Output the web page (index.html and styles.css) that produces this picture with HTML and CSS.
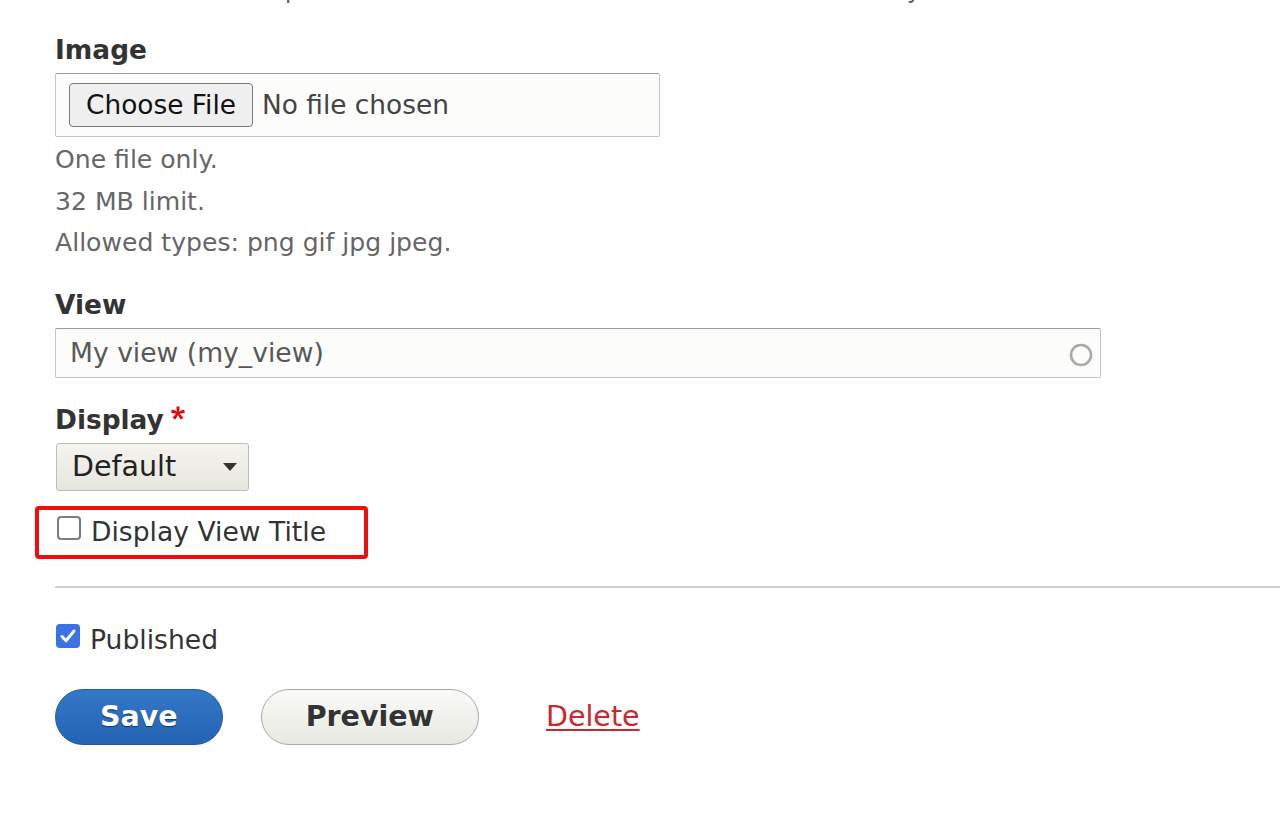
FILE: index.html
```html
<!DOCTYPE html>
<html lang="en">
<head>
<meta charset="utf-8">
<title>Edit block</title>
<link rel="stylesheet" href="styles.css">
</head>
<body>
<form class="page">
  <p class="description lead-desc">Select the view to present on this block. Pick the one that is shown by default.</p>

  <div class="form-item">
    <label class="form-label">Image</label>
    <div class="file-box">
      <span class="file-button">Choose File</span>
      <span class="file-status">No file chosen</span>
    </div>
    <div class="description desc-list">
      <div>One file only.</div>
      <div>32 MB limit.</div>
      <div>Allowed types: png gif jpg jpeg.</div>
    </div>
  </div>

  <div class="form-item">
    <label class="form-label">View</label>
    <div class="text-input">
      <span class="input-value">My view (my_view)</span>
      <svg class="throbber" width="24" height="24" viewBox="0 0 24 24" aria-hidden="true"><circle cx="12" cy="12" r="10" fill="none" stroke="#a9a9a9" stroke-width="2.6"/></svg>
    </div>
  </div>

  <div class="form-item form-item-display">
    <label class="form-label">Display<svg class="required" width="14" height="14" viewBox="0 0 16 16" aria-hidden="true"><path fill="#e00" d="M0,7.562l1.114-3.438c2.565,0.906,4.43,1.688,5.59,2.35C6.398,3.553,6.237,1.544,6.22,0.447h3.511c-0.05,1.597-0.234,3.6-0.558,6.003c1.664-0.838,3.566-1.613,5.714-2.325L16,7.562c-2.05,0.678-4.060,1.131-6.028,1.356c0.984,0.856,2.372,2.381,4.166,4.575l-2.906,2.059c-0.935-1.274-2.041-3.009-3.316-5.206c-1.194,2.275-2.244,4.013-3.147,5.206l-2.856-2.059c1.872-2.307,3.211-3.832,4.017-4.575C3.849,8.516,1.872,8.062,0,7.562"/></svg></label>
    <div class="select">
      <span class="select-value">Default</span>
      <svg class="select-arrow" width="14" height="8" viewBox="0 0 14 8" aria-hidden="true"><path d="M0 0h14L7 8z" fill="#333"/></svg>
    </div>
  </div>

  <div class="highlight">
    <div class="checkbox-row">
      <span class="checkbox"></span>
      <span class="checkbox-label">Display View Title</span>
    </div>
  </div>

  <hr class="divider">

  <div class="checkbox-row published">
    <span class="checkbox checked"><svg width="24" height="24" viewBox="0 0 24 24" aria-hidden="true"><path d="M6 12.5l4 4.2L18 7" fill="none" stroke="#fff" stroke-width="3" stroke-linecap="round" stroke-linejoin="round"/></svg></span>
    <span class="checkbox-label">Published</span>
  </div>

  <div class="actions">
    <span class="btn btn-primary">Save</span>
    <span class="btn btn-secondary">Preview</span>
    <a class="link-danger" href="#">Delete</a>
  </div>
</form>
</body>
</html>
```
FILE: styles.css
```css
html, body {
  margin: 0;
  padding: 0;
  background: #fff;
}
body {
  font-family: "DejaVu Sans", "Liberation Sans", sans-serif;
  font-size: 26.5px;
  line-height: 40px;
  color: #333;
  overflow: hidden;
}
.page {
  padding-left: 55px;
  margin: 0;
}
.description {
  font-size: 25.1px;
  color: #666;
  margin: 0;
}
.lead-desc {
  font-size: 24.7px;
  line-height: 40px;
  margin-top: -30.5px;
  white-space: nowrap;
}
.form-item {
  margin-top: 20.5px;
}
.form-item + .form-item {
  margin-top: 21.5px;
}
.form-item-display {
  margin-top: 22px !important;
}
.form-label {
  display: flex;
  align-items: flex-start;
  font-weight: bold;
  font-size: 26.4px;
  line-height: 40px;
  margin-bottom: 3px;
}
.required {
  margin-left: 7px;
  margin-top: 6px;
}
.file-box {
  box-sizing: border-box;
  width: 605px;
  height: 64px;
  border: 1px solid #c4c4c4;
  border-top-color: #9c9c9c;
  border-radius: 2px;
  background: #fcfcfa;
  padding: 9px 13px;
  display: flex;
  align-items: center;
  gap: 9px;
}
.file-button {
  box-sizing: border-box;
  height: 44px;
  padding: 0 16px;
  border: 1px solid #7a7a7a;
  border-radius: 4px;
  background: #efefef;
  color: #111;
  font-size: 26.4px;
  line-height: 42px;
}
.file-status {
  color: #444;
  font-size: 26.4px;
}
.desc-list {
  margin-top: 2px;
  line-height: 41.5px;
}
.text-input {
  box-sizing: border-box;
  width: 1046px;
  height: 50px;
  border: 1px solid #c4c4c4;
  border-top-color: #9c9c9c;
  border-radius: 2px;
  background: #fcfcfa;
  padding: 0 7px 0 14px;
  display: flex;
  align-items: center;
  justify-content: space-between;
}
.input-value {
  color: #595959;
  font-size: 26.6px;
}
.throbber {
  margin-top: 3px;
}
.select {
  box-sizing: border-box;
  width: 193px;
  height: 48px;
  margin-left: 1px;
  border: 1px solid #bdbdb8;
  border-radius: 3px;
  background: linear-gradient(#f5f4ef, #e6e5de);
  padding: 0 11px 0 15px;
  display: flex;
  align-items: center;
  justify-content: space-between;
}
.select-value {
  font-size: 28.5px;
  color: #222;
}
.highlight {
  box-sizing: border-box;
  width: 333px;
  margin-top: 15px;
  margin-left: -20px;
  border: 4px solid #f20d0d;
  border-radius: 4px;
  padding: 2px 0 3px 17px;
}
.checkbox-row {
  display: flex;
  align-items: flex-start;
  gap: 10px;
  line-height: 40px;
}
.checkbox {
  box-sizing: border-box;
  flex: none;
  width: 24px;
  height: 24px;
  margin-top: 4px;
  margin-left: 1px;
  border: 2px solid #7d7d7d;
  border-radius: 4px;
  background: #fff;
}
.checkbox.checked {
  border: none;
  background: #3b71e4;
}
.checkbox.checked svg {
  display: block;
}
.checkbox-label {
  font-size: 26.6px;
  color: #333;
}
.divider {
  border: 0;
  height: 2px;
  background: #cdcdcd;
  margin: 27px 0 0 0;
}
.published {
  margin-top: 32px;
}
.actions {
  margin-top: 29px;
  display: flex;
  align-items: center;
}
.btn {
  box-sizing: border-box;
  height: 56px;
  padding: 0 44px;
  border-radius: 28px;
  font-weight: bold;
  font-size: 28.5px;
  line-height: 54px;
  display: inline-block;
}
.btn-primary {
  background: linear-gradient(#3578c8, #2263b2);
  border: 1px solid #1f5aa2;
  color: #fff;
  text-shadow: 0 1px 1px rgba(0, 0, 0, 0.5);
  margin-right: 38px;
}
.btn-secondary {
  background: linear-gradient(#fafaf7, #e8e8e2);
  border: 1px solid #a8a8a8;
  color: #333;
  text-shadow: 0 1px 0 rgba(255, 255, 255, 0.6);
  margin-right: 67px;
}
.link-danger {
  color: #c9282d;
  font-size: 28.5px;
  text-decoration: underline;
  text-underline-offset: 3px;
}
```
